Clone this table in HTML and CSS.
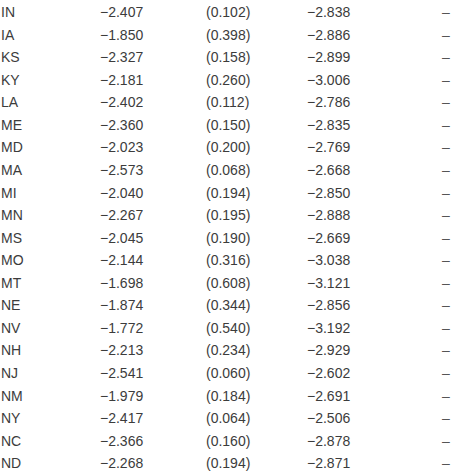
FILE: index.html
```html
<!DOCTYPE html>
<html>
<head>
<meta charset="utf-8">
<link rel="stylesheet" href="styles.css">
</head>
<body>
<div class="table">
<div class="row"><span>IN</span><span>−2.407</span><span>(0.102)</span><span>−2.838</span><span class="dash">–</span></div>
<div class="row"><span>IA</span><span>−1.850</span><span>(0.398)</span><span>−2.886</span><span class="dash">–</span></div>
<div class="row"><span>KS</span><span>−2.327</span><span>(0.158)</span><span>−2.899</span><span class="dash">–</span></div>
<div class="row"><span>KY</span><span>−2.181</span><span>(0.260)</span><span>−3.006</span><span class="dash">–</span></div>
<div class="row"><span>LA</span><span>−2.402</span><span>(0.112)</span><span>−2.786</span><span class="dash">–</span></div>
<div class="row"><span>ME</span><span>−2.360</span><span>(0.150)</span><span>−2.835</span><span class="dash">–</span></div>
<div class="row"><span>MD</span><span>−2.023</span><span>(0.200)</span><span>−2.769</span><span class="dash">–</span></div>
<div class="row"><span>MA</span><span>−2.573</span><span>(0.068)</span><span>−2.668</span><span class="dash">–</span></div>
<div class="row"><span>MI</span><span>−2.040</span><span>(0.194)</span><span>−2.850</span><span class="dash">–</span></div>
<div class="row"><span>MN</span><span>−2.267</span><span>(0.195)</span><span>−2.888</span><span class="dash">–</span></div>
<div class="row"><span>MS</span><span>−2.045</span><span>(0.190)</span><span>−2.669</span><span class="dash">–</span></div>
<div class="row"><span>MO</span><span>−2.144</span><span>(0.316)</span><span>−3.038</span><span class="dash">–</span></div>
<div class="row"><span>MT</span><span>−1.698</span><span>(0.608)</span><span>−3.121</span><span class="dash">–</span></div>
<div class="row"><span>NE</span><span>−1.874</span><span>(0.344)</span><span>−2.856</span><span class="dash">–</span></div>
<div class="row"><span>NV</span><span>−1.772</span><span>(0.540)</span><span>−3.192</span><span class="dash">–</span></div>
<div class="row"><span>NH</span><span>−2.213</span><span>(0.234)</span><span>−2.929</span><span class="dash">–</span></div>
<div class="row"><span>NJ</span><span>−2.541</span><span>(0.060)</span><span>−2.602</span><span class="dash">–</span></div>
<div class="row"><span>NM</span><span>−1.979</span><span>(0.184)</span><span>−2.691</span><span class="dash">–</span></div>
<div class="row"><span>NY</span><span>−2.417</span><span>(0.064)</span><span>−2.506</span><span class="dash">–</span></div>
<div class="row"><span>NC</span><span>−2.366</span><span>(0.160)</span><span>−2.878</span><span class="dash">–</span></div>
<div class="row"><span>ND</span><span>−2.268</span><span>(0.194)</span><span>−2.871</span><span class="dash">–</span></div>
</div>
</body>
</html>
```

FILE: styles.css
```css
html, body {
  margin: 0;
  padding: 0;
  background: #ffffff;
}
body {
  font-family: "Liberation Sans", Arial, sans-serif;
  font-size: 14px;
  color: #3c3c3c;
}
.table {
  display: grid;
  grid-auto-rows: 22.575px;
  padding-top: 1px;
  padding-left: 1px;
}
.row {
  display: grid;
  grid-template-columns: 99px 106px 101px 135px 1fr;
  line-height: 22.575px;
  white-space: nowrap;
}
.dash {
  color: #555555;
}
```
